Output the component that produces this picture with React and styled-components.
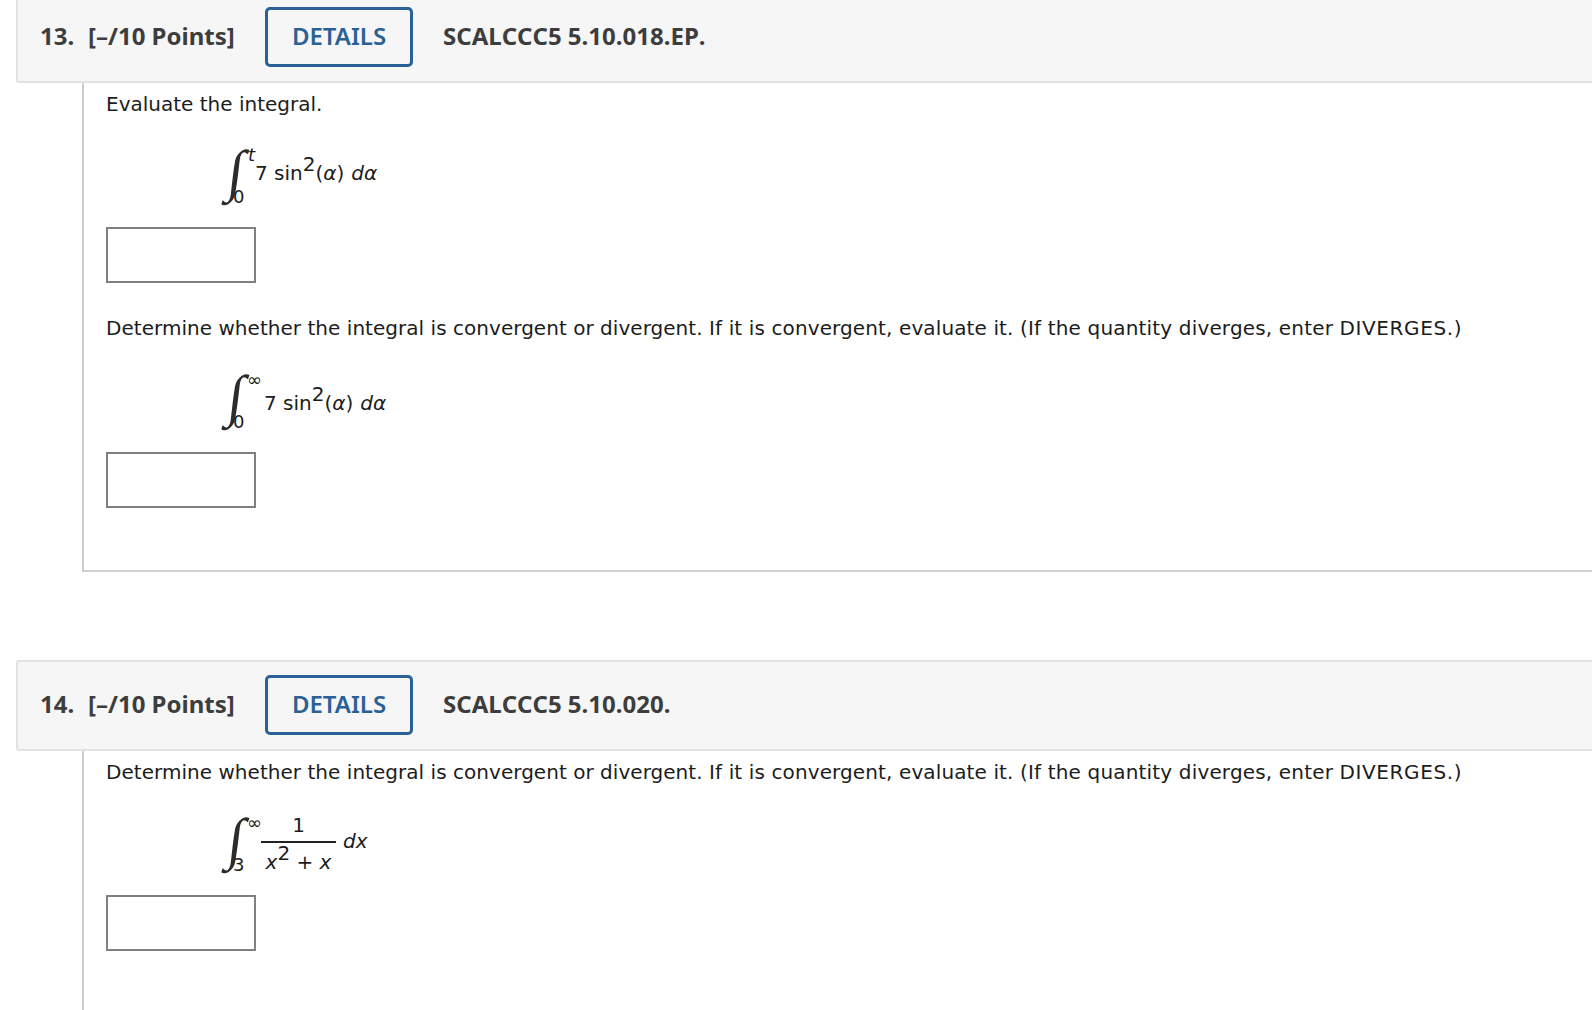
import React from "react";
import styled, { createGlobalStyle } from "styled-components";

const Global = createGlobalStyle`
  html, body { margin: 0; padding: 0; background: #fff; overflow: hidden; }
  body { font-family: "Noto Sans", "Open Sans", sans-serif; color: #222; }
`;
const Page = styled.div`
  width: 1592px; height: 1010px; overflow: hidden; box-sizing: border-box;
  padding-left: 16px;
`;
const Sheet = styled.div`
  margin-top: -8px; width: 1640px; display: flex; flex-direction: column;
`;
const Question = styled.section`
  margin-bottom: 88px;
`;
const Header = styled.header`
  box-sizing: border-box; height: 91px; display: flex; align-items: center;
  padding: 0 0 2px 22px; background: #f6f6f6; border: 2px solid #e2e2e2; border-radius: 3px;
  font-size: 24px; font-weight: 700; color: #3d3d3d;
`;
const Label = styled.span`
  width: ${p => p.$w}px; position: relative; top: -1px;
`;
const DetailsButton = styled.button`
  box-sizing: border-box; width: 148px; height: 60px; padding: 0 0 2px; background: transparent;
  border: 3px solid #2a6196; border-radius: 5px; color: #2a6196;
  font: 600 24px "Noto Sans", sans-serif;
`;
const Code = styled.span`
  margin-left: 30px; position: relative; top: -1px; font-kerning: none;
`;
const Body = styled.div`
  box-sizing: border-box; margin-left: 66px; padding: 8px 0 0 22px;
  height: ${p => p.$h}px; border-left: 2px solid #ccc;
  border-bottom: ${p => (p.$open ? "0" : "2px solid #d0d0d0")};
`;
const Prompt = styled.p`
  margin: ${p => p.$top || 0}px 0 0; font-family: "DejaVu Sans", sans-serif; font-size: 20px;
  line-height: 26px; color: #1c1c1c; white-space: nowrap;
`;
const Run = styled.span`
  letter-spacing: ${p => p.$ls}px;
`;
const MathRow = styled.div`
  display: flex; align-items: center; height: 58px; margin: ${p => p.$top}px 0 0 117px;
  font-family: "DejaVu Sans", sans-serif; font-size: 20px; color: #1c1c1c; white-space: nowrap;
`;
const IntegralSign = styled.span`
  display: block; width: 24px; height: 58px; line-height: 48px; text-align: center;
  font-family: "Noto Sans", serif; font-size: 57px; color: #2c2c2c;
  transform: translateX(1px) skewX(-7deg);
`;
const Limits = styled.span`
  box-sizing: border-box; display: flex; flex-direction: column; justify-content: space-between;
  height: 66px; padding-top: 6px; margin-left: -14px; width: ${p => p.$w}px;
  font-size: 18px; line-height: 18px;
`;
const Upper = styled.span`
  margin-left: ${p => p.$x}px; font-style: ${p => (p.$it ? "italic" : "normal")};
`;
const Lower = styled.span``;
const Expr = styled.span`
  display: inline-flex; align-items: baseline; margin-top: ${p => p.$drop || 0}px;
`;
const Sup = styled.span`
  font-size: 20px; position: relative; top: -9px; line-height: 0;
`;
const Ital = styled.i`
  margin-left: ${p => p.$gap || 0}px;
`;
const Fraction = styled.span`
  display: inline-flex; flex-direction: column; align-items: center; align-self: flex-start; width: 75px;
`;
const Num = styled.span`
  box-sizing: border-box; width: 100%; height: 31px; line-height: 26px; text-align: center;
  font-size: 20px; border-bottom: 2px solid #222;
`;
const Den = styled.span`
  height: 30px; line-height: 38px; font-size: 20px;
`;
const AnswerBox = styled.input`
  display: block; box-sizing: border-box; width: 150px; height: 56px; margin-top: ${p => p.$top}px;
  border: 2px solid #808080; background: #fff; border-radius: 0; padding: 0;
`;

const Head = ({ n, code }) => (
  <Header>
    <Label $w={48}>{n}.</Label>
    <Label $w={177}>[–/10 Points]</Label>
    <DetailsButton>DETAILS</DetailsButton>
    <Code>{code}</Code>
  </Header>
);
const Question_ = () => (
  <>
    <Run $ls={0.035}>Determine whether the integral is convergent or divergent. </Run>
    <Run $ls={0.116}>If it is convergent, evaluate it. </Run>
    <Run $ls={0.165}>(If the quantity diverges, enter </Run>
    <Run $ls={0.6}>DIVERGES.)</Run>
  </>
);
const SinExpr = ({ drop }) => (
  <Expr $drop={drop}>
    7&nbsp;sin<Sup>2</Sup>(<i>α</i>)<Ital $gap={7}>dα</Ital>
  </Expr>
);

export default function App() {
  return (
    <Page>
      <Global />
      <Sheet>
        <Question>
          <Head n="13" code="SCALCCC5 5.10.018.EP." />
          <Body $h={489}>
            <Prompt>Evaluate the integral.</Prompt>
            <MathRow $top={27}>
              <IntegralSign>∫</IntegralSign>
              <Limits $w={22}>
                <Upper $x={15} $it>t</Upper>
                <Lower>0</Lower>
              </Limits>
              <SinExpr />
            </MathRow>
            <AnswerBox $top={25} />
            <Prompt $top={32}><Question_ /></Prompt>
            <MathRow $top={28}>
              <IntegralSign>∫</IntegralSign>
              <Limits $w={31}>
                <Upper $x={14}>∞</Upper>
                <Lower>0</Lower>
              </Limits>
              <SinExpr drop={10} />
            </MathRow>
            <AnswerBox $top={25} />
          </Body>
        </Question>
        <Question>
          <Head n="14" code="SCALCCC5 5.10.020." />
          <Body $h={260} $open>
            <Prompt><Question_ /></Prompt>
            <MathRow $top={27}>
              <IntegralSign>∫</IntegralSign>
              <Limits $w={28}>
                <Upper $x={14}>∞</Upper>
                <Lower>3</Lower>
              </Limits>
              <Fraction>
                <Num>1</Num>
                <Den><i>x</i><Sup>2</Sup> + <i>x</i></Den>
              </Fraction>
              <Ital $gap={7}>dx</Ital>
            </MathRow>
            <AnswerBox $top={25} />
          </Body>
        </Question>
      </Sheet>
    </Page>
  );
}
